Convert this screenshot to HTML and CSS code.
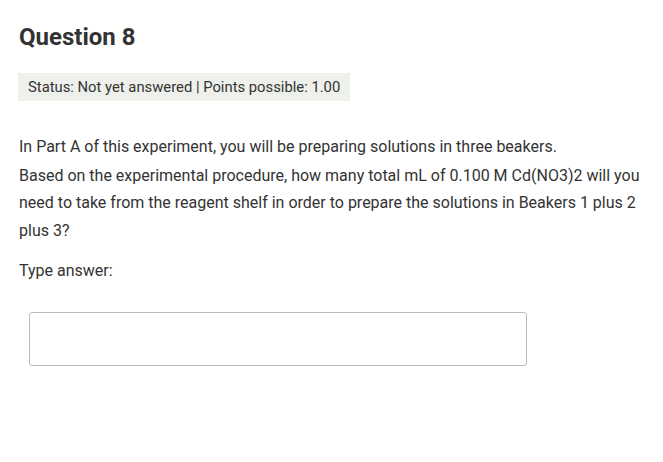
FILE: index.html
```html
<!DOCTYPE html>
<html>
<head>
<meta charset="utf-8">
<link rel="stylesheet" href="styles.css">
</head>
<body>
<div class="question">
  <h2 class="title">Question 8</h2>
  <div class="status">Status: Not yet answered | Points possible: 1.00</div>
  <div class="body">
    <p class="intro">In Part A of this experiment, you will be preparing solutions in three beakers.</p>
    <p class="text">Based on the experimental procedure, how many total mL of 0.100 M Cd(NO3)2 will you need to take from the reagent shelf in order to prepare the solutions in Beakers 1 plus 2 plus 3?</p>
    <p class="label">Type answer:</p>
    <div class="answer"><input class="input" type="text"></div>
  </div>
</div>
</body>
</html>
```
FILE: styles.css
```css
html, body {
  margin: 0;
  padding: 0;
  background: #fff;
}
body {
  font-family: Roboto, "Liberation Sans", sans-serif;
  color: #333;
}
.question {
  padding: 22px 19px 0 19px;
}
.title {
  margin: 0;
  font-size: 24px;
  font-weight: 700;
  line-height: 30px;
  color: #333;
}
.status {
  display: inline-block;
  margin-top: 21px;
  background: #eef0eb;
  color: #333;
  font-size: 14.8px;
  line-height: 28px;
  padding: 0 10px;
  margin-left: -1px;
}
.body {
  margin-top: 32px;
  font-size: 16px;
  line-height: 27.5px;
  color: #333;
}
.intro, .text {
  margin: 0 0 1px 0;
}
.label {
  margin: 13px 0 0 0;
}
.answer {
  margin-top: 27px;
  padding-left: 10px;
}
.input {
  box-sizing: border-box;
  width: 498px;
  height: 54px;
  border: 1px solid #bdbdbd;
  border-radius: 3px;
  background: #fff;
  margin: 0;
  padding: 0 10px;
  font-size: 15px;
  display: block;
}
```
